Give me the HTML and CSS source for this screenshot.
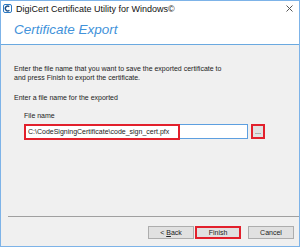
FILE: index.html
```html
<!DOCTYPE html>
<html>
<head>
<meta charset="utf-8">
<link rel="stylesheet" href="styles.css">
</head>
<body>
<div class="window">
  <div class="header">
    <div class="titlebar">
      <svg class="appicon" width="9" height="9" viewBox="0 0 9 9">
        <rect x="0.5" y="0.5" width="8" height="8" rx="1.5" fill="#fff" stroke="#2b78c2"/>
        <path d="M6.3 2.6 A2.4 2.4 0 1 0 6.4 6.2" fill="none" stroke="#1d4f86" stroke-width="1.4"/>
      </svg>
      <span class="apptitle">DigiCert Certificate Utility for Windows©</span>
      <svg class="close" width="7" height="7" viewBox="0 0 7 7">
        <path d="M0.5 0.5 L6.5 6.5 M6.5 0.5 L0.5 6.5" stroke="#555" stroke-width="1"/>
      </svg>
    </div>
    <div class="heading">Certificate Export</div>
  </div>
  <div class="content">
    <p class="intro">Enter the file name that you want to save the exported certificate to<br>and press Finish to export the certificate.</p>
    <p class="prompt">Enter a file name for the exported</p>
    <div class="field">
      <div class="label">File name</div>
      <div class="inputrow">
        <div class="input">C:\CodeSigningCertificate\code_sign_cert.pfx<span class="mark mark-input"></span></div>
        <div class="browse">...<span class="mark mark-browse"></span></div>
      </div>
    </div>
  </div>
  <div class="footer">
    <div class="sep"></div>
    <div class="buttons">
      <div class="btn">&lt; <u>B</u>ack</div>
      <div class="btn finish">Finish<span class="mark mark-finish"></span></div>
      <div class="btn cancel">Cancel</div>
    </div>
  </div>
</div>
</body>
</html>
```
FILE: styles.css
```css
html, body {
  margin: 0;
  padding: 0;
  background: #f0f0f0;
}
.window {
  width: 300px;
  height: 247px;
  box-sizing: border-box;
  border: 1px solid #7db3e8;
  background: #f0f0f0;
  display: flex;
  flex-direction: column;
  font-family: "Liberation Sans", Arial, sans-serif;
  color: #222;
}
.header {
  background: #fff;
  height: 43px;
  border-bottom: 1px solid #6aa9e0;
  display: flex;
  flex-direction: column;
}
.titlebar {
  height: 15px;
  display: flex;
  align-items: center;
  padding-left: 2px;
  padding-right: 6px;
}
.appicon {
  flex: none;
  display: block;
}
.apptitle {
  font-size: 9px;
  margin-left: 4px;
  color: #111;
  flex: 1;
}
.close {
  flex: none;
  display: block;
}
.heading {
  margin-top: 5px;
  padding-left: 13px;
  font-size: 13.5px;
  font-style: italic;
  color: #4292da;
  line-height: 18px;
}
.content {
  flex: 1;
  padding: 0 13px;
  font-size: 7px;
}
.intro {
  margin: 19px 0 0 0;
  line-height: 9px;
}
.prompt {
  margin: 11px 0 0 0;
  line-height: 9px;
}
.field {
  margin-top: 9px;
  padding-left: 10px;
}
.label {
  line-height: 9px;
}
.inputrow {
  margin-top: 4px;
  display: flex;
  align-items: center;
}
.input {
  position: relative;
  width: 224px;
  height: 15px;
  box-sizing: border-box;
  border: 1px solid #5d9fe0;
  background: #fff;
  line-height: 13px;
  padding-left: 3px;
  font-size: 7px;
  white-space: nowrap;
}
.browse {
  position: relative;
  margin-left: 4px;
  width: 12px;
  height: 13px;
  box-sizing: border-box;
  border: 1px solid #adadad;
  background: #e1e1e1;
  font-size: 7px;
  line-height: 11px;
  text-align: center;
}
.mark {
  position: absolute;
  border: 2px solid #e2202c;
  box-sizing: border-box;
}
.mark-input {
  left: -1px;
  top: -1px;
  width: 156px;
  height: 16px;
}
.mark-browse {
  left: -2px;
  top: -2px;
  right: -2px;
  bottom: -2px;
}
.footer {
  height: 30px;
  padding: 0 0 0 7px;
  display: flex;
  flex-direction: column;
}
.sep {
  height: 1px;
  background: #a0a0a0;
}
.buttons {
  margin-top: 9px;
  display: flex;
  justify-content: flex-end;
  padding-right: 5px;
}
.btn {
  position: relative;
  width: 46px;
  height: 13px;
  box-sizing: border-box;
  border: 1px solid #adadad;
  background: #e1e1e1;
  font-size: 7px;
  line-height: 11px;
  text-align: center;
}
.finish {
  margin-left: 1px;
}
.cancel {
  margin-left: 7px;
}
.mark-finish {
  left: -1px;
  top: -1px;
  right: -1px;
  bottom: -1px;
}
```
